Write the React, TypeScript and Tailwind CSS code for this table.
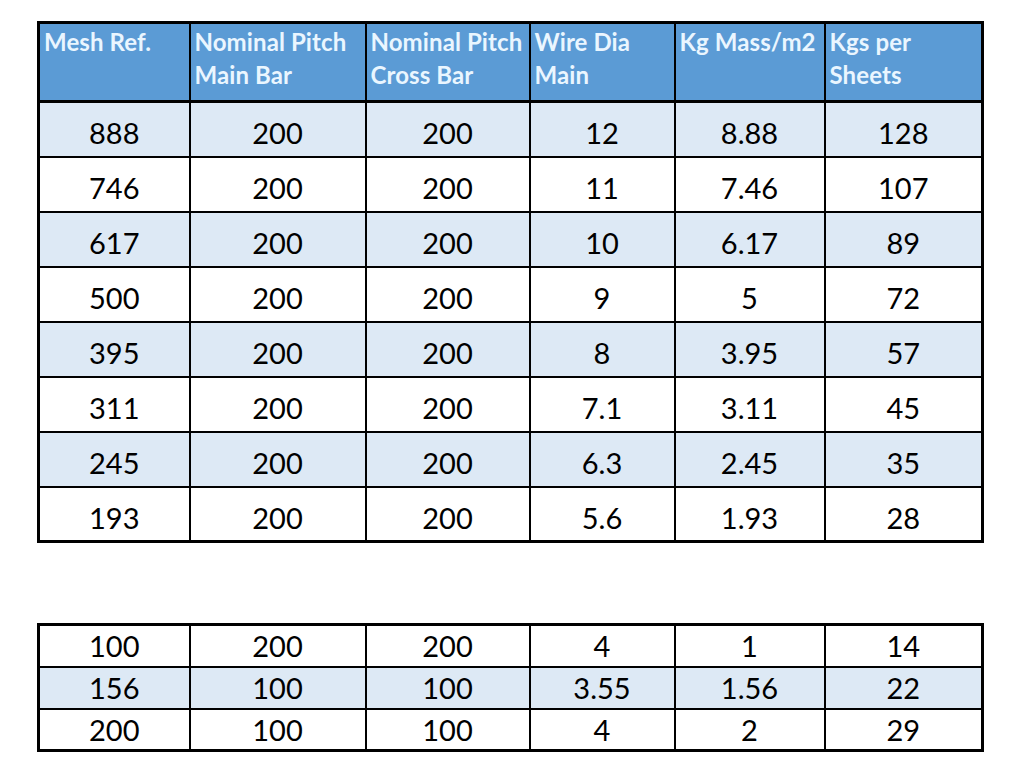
import React from "react";

const HEADERS = [
  ["Mesh Ref."],
  ["Nominal Pitch", "Main Bar"],
  ["Nominal Pitch", "Cross Bar"],
  ["Wire Dia", "Main"],
  ["Kg Mass/m2"],
  ["Kgs per", "Sheets"],
];

const WIDTHS = ["w-[151px]", "w-[176px]", "w-[164px]", "w-[145px]", "w-[150px]", "w-[158px]"];

const MAIN_ROWS = [
  ["888", "200", "200", "12", "8.88", "128"],
  ["746", "200", "200", "11", "7.46", "107"],
  ["617", "200", "200", "10", "6.17", "89"],
  ["500", "200", "200", "9", "5", "72"],
  ["395", "200", "200", "8", "3.95", "57"],
  ["311", "200", "200", "7.1", "3.11", "45"],
  ["245", "200", "200", "6.3", "2.45", "35"],
  ["193", "200", "200", "5.6", "1.93", "28"],
];

const EXTRA_ROWS = [
  ["100", "200", "200", "4", "1", "14"],
  ["156", "100", "100", "3.55", "1.56", "22"],
  ["200", "100", "100", "4", "2", "29"],
];

function Cols() {
  return (
    <colgroup>
      {WIDTHS.map((w, i) => (
        <col key={i} className={w} />
      ))}
    </colgroup>
  );
}

export default function App() {
  return (
    <div className="w-[1024px] h-[770px] bg-white text-black font-['Lato','Liberation_Sans',sans-serif] pt-[21px] pl-[37px]">
      {/* Main table */}
      <table className="table-fixed border-collapse w-[944px] border-[3px] border-black">
        <Cols />
        <thead>
          <tr className="bg-[#5b9bd5] h-[79px] border-b-[3px] border-black">
            {HEADERS.map((lines, i) => (
              <th
                key={i}
                className="border-x-2 border-black align-top text-left pl-[4px] pt-[1px] font-bold text-[24px] leading-[33px] text-[#eaf6ff] tracking-[0.1px]"
              >
                {lines.map((l) => (
                  <div key={l} className="whitespace-nowrap">{l}</div>
                ))}
              </th>
            ))}
          </tr>
        </thead>
        <tbody>
          {MAIN_ROWS.map((row, r) => (
            <tr
              key={r}
              className={`h-[55px] ${r % 2 === 0 ? "bg-[#dde9f5]" : "bg-white"}`}
            >
              {row.map((v, c) => (
                <td
                  key={c}
                  className="border-2 border-black text-center text-[29px] leading-none pt-[7px]"
                >
                  {v}
                </td>
              ))}
            </tr>
          ))}
        </tbody>
      </table>

      {/* Additional sizes */}
      <table className="table-fixed border-collapse w-[944px] border-[3px] border-black mt-[80px]">
        <Cols />
        <tbody>
          {EXTRA_ROWS.map((row, r) => (
            <tr
              key={r}
              className={`h-[42px] ${r === 1 ? "bg-[#dde9f5]" : "bg-white"}`}
            >
              {row.map((v, c) => (
                <td
                  key={c}
                  className="border-2 border-black text-center text-[29px] leading-none"
                >
                  {v}
                </td>
              ))}
            </tr>
          ))}
        </tbody>
      </table>
    </div>
  );
}
